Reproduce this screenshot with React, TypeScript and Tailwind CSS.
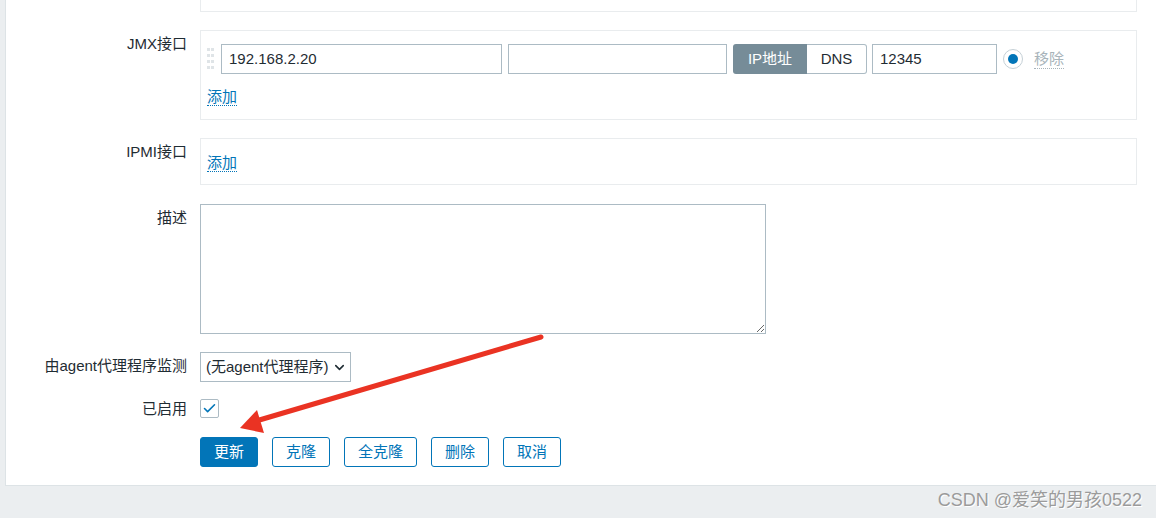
import { Check, ChevronDown } from "lucide-react";

const font = { fontFamily: '"Liberation Sans", Arial, "Noto Sans CJK SC", sans-serif' };

function Label({ children }: { children: React.ReactNode }) {
  return (
    <div className="w-[194px] shrink-0 pr-[13px] pt-[5px] text-right text-[15px] leading-[18px] text-[#1f2c33]">
      {children}
    </div>
  );
}

function DragHandle() {
  return (
    <svg width="8" height="24" viewBox="0 0 8 24" className="mr-[6px]">
      {[0, 1, 2, 3].map((r) =>
        [0, 1].map((c) => (
          <rect key={`${r}-${c}`} x={c * 4} y={r * 6 + 1} width="3" height="3" fill="#dfe4e7" />
        ))
      )}
    </svg>
  );
}

function Btn({ label, primary, w }: { label: string; primary?: boolean; w: string }) {
  return (
    <button
      className={`h-[30px] ${w} rounded-[3px] border border-[#0275b8] text-[15px] ${
        primary ? "bg-[#0275b8] text-white" : "bg-white text-[#0275b8]"
      }`}
    >
      {label}
    </button>
  );
}

export default function App() {
  return (
    <div className="relative h-[518px] w-[1156px] overflow-hidden bg-[#ebeef0]" style={font}>
      <div className="ml-[5px] flex h-[486px] flex-col gap-[18px] border-b border-l border-[#dde3e6] bg-white">
        {/* previous field box */}
        <div className="flex">
          <div className="w-[194px] shrink-0" />
          <div className="h-[12px] w-[937px] border-x border-b border-[#e9ecee]" />
        </div>

        {/* JMX */}
        <div className="flex">
          <Label>JMX接口</Label>
          <div className="h-[90px] w-[937px] border border-[#e9ecee] pl-[6px] pt-[13px]">
            <div className="flex h-[30px] items-center">
              <DragHandle />
              <div className="flex h-[30px] w-[281px] items-center border border-[#acbbc4] px-[7px] text-[15px] text-[#1f2c33]">
                192.168.2.20
              </div>
              <div className="ml-[6px] h-[30px] w-[219px] border border-[#acbbc4]" />
              <div className="ml-[6px] flex h-[30px]">
                <div className="flex w-[74px] items-center justify-center rounded-l-[3px] bg-[#768c98] text-[15px] text-white">
                  IP地址
                </div>
                <div className="flex w-[60px] items-center justify-center rounded-r-[3px] border border-l-0 border-[#acbbc4] text-[15px] text-[#1f2c33]">
                  DNS
                </div>
              </div>
              <div className="ml-[5px] flex h-[30px] w-[125px] items-center border border-[#acbbc4] px-[7px] text-[15px] text-[#1f2c33]">
                12345
              </div>
              <div className="ml-[6px] flex h-[20px] w-[20px] items-center justify-center rounded-full border border-[#c5d0d6]">
                <div className="h-[10px] w-[10px] rounded-full bg-[#0275b8]" />
              </div>
              <span className="ml-[11px] border-b border-dotted border-[#a8b4ba] text-[15px] leading-[18px] text-[#a8b4ba]">
                移除
              </span>
            </div>
            <div className="mt-[14px] leading-[18px]">
              <span className="border-b border-dotted border-[#0275b8] text-[15px] leading-[18px] text-[#0275b8]">
                添加
              </span>
            </div>
          </div>
        </div>

        {/* IPMI */}
        <div className="flex">
          <Label>IPMI接口</Label>
          <div className="h-[47px] w-[937px] border border-[#e9ecee] pl-[6px] pt-[15px] leading-[18px]">
            <span className="border-b border-dotted border-[#0275b8] text-[15px] leading-[18px] text-[#0275b8]">
              添加
            </span>
          </div>
        </div>

        {/* 描述 */}
        <div className="mt-px flex">
          <Label>描述</Label>
          <textarea className="h-[130px] w-[566px] border border-[#acbbc4] outline-none" />
        </div>

        {/* agent */}
        <div className="flex">
          <Label>由agent代理程序监测</Label>
          <div className="flex h-[30px] w-[151px] items-center justify-between border border-[#acbbc4] pl-[5px] pr-[3px] text-[15px] text-[#1f2c33]">
            <span>(无agent代理程序)</span>
            <ChevronDown size={15} strokeWidth={2.5} color="#1f2c33" />
          </div>
        </div>

        {/* enabled */}
        <div className="-mt-px flex">
          <div className="w-[194px] shrink-0 pr-[13px] pt-[1px] text-right text-[15px] leading-[18px] text-[#1f2c33]">
            已启用
          </div>
          <div className="flex h-[19px] w-[19px] items-center justify-center rounded-[2px] border border-[#acbbc4]">
            <Check size={15} strokeWidth={2.5} color="#0275b8" />
          </div>
        </div>

        {/* buttons */}
        <div className="mt-px flex">
          <div className="w-[194px] shrink-0" />
          <div className="flex gap-[14px]">
            <Btn label="更新" primary w="w-[58px]" />
            <Btn label="克隆" w="w-[58px]" />
            <Btn label="全克隆" w="w-[73px]" />
            <Btn label="删除" w="w-[58px]" />
            <Btn label="取消" w="w-[58px]" />
          </div>
        </div>
      </div>

      {/* annotation arrow */}
      <svg className="pointer-events-none absolute left-0 top-0" width="1156" height="518">
        <line x1="541" y1="337" x2="256" y2="421" stroke="#ea3323" strokeWidth="5" strokeLinecap="round" />
        <polygon points="240,428 257,410 264,433" fill="#ea3323" />
      </svg>

      <div
        className="absolute bottom-[7px] right-[14px] text-[18px] leading-[22px] text-[#9b9b9b]"
        style={{ textShadow: "1px 1px 0 #ffffff" }}
      >
        CSDN @爱笑的男孩0522
      </div>
    </div>
  );
}
